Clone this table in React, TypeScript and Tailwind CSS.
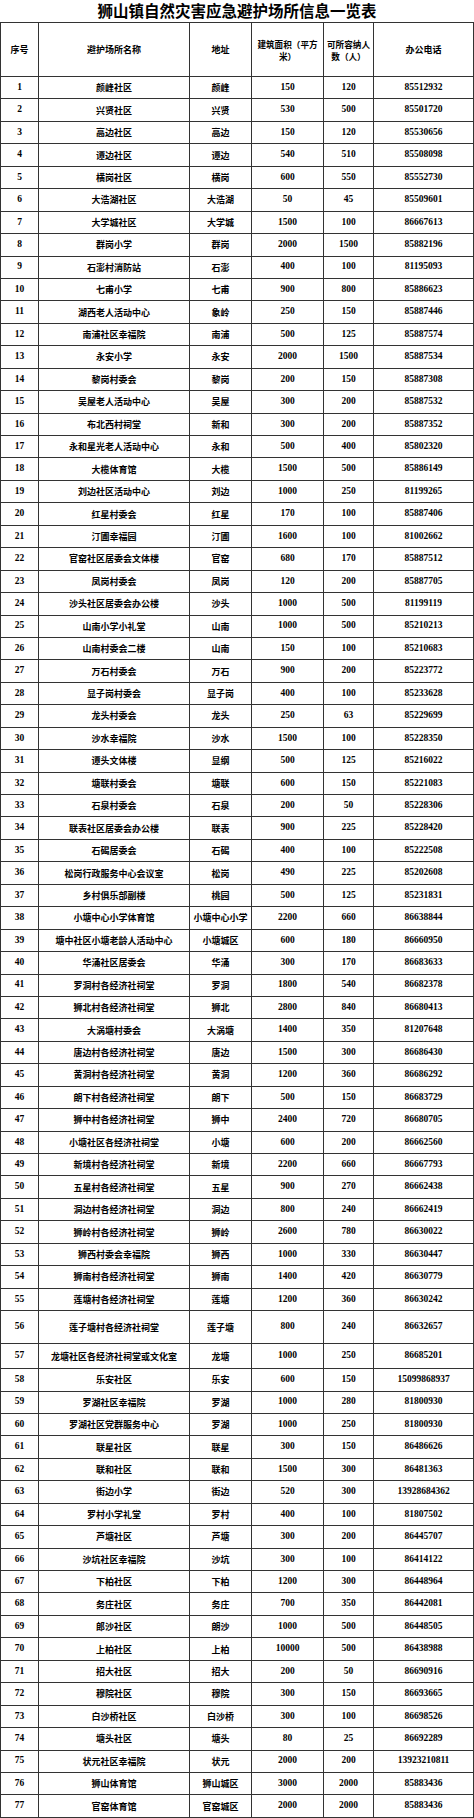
import React from "react";

type Row = [number, string, string, number, number, string];

const ROWS: Row[] = [
  [1, "颜峰社区", "颜峰", 150, 120, "85512932"],
  [2, "兴贤社区", "兴贤", 530, 500, "85501720"],
  [3, "高边社区", "高边", 150, 120, "85530656"],
  [4, "谭边社区", "谭边", 540, 510, "85508098"],
  [5, "横岗社区", "横岗", 600, 550, "85552730"],
  [6, "大浩湖社区", "大浩湖", 50, 45, "85509601"],
  [7, "大学城社区", "大学城", 1500, 100, "86667613"],
  [8, "群岗小学", "群岗", 2000, 1500, "85882196"],
  [9, "石澎村消防站", "石澎", 400, 100, "81195093"],
  [10, "七甫小学", "七甫", 900, 800, "85886623"],
  [11, "湖西老人活动中心", "象岭", 250, 150, "85887446"],
  [12, "南浦社区幸福院", "南浦", 500, 125, "85887574"],
  [13, "永安小学", "永安", 2000, 1500, "85887534"],
  [14, "黎岗村委会", "黎岗", 200, 150, "85887308"],
  [15, "吴屋老人活动中心", "吴屋", 300, 200, "85887532"],
  [16, "布北西村祠堂", "新和", 300, 200, "85887352"],
  [17, "永和星光老人活动中心", "永和", 500, 400, "85802320"],
  [18, "大榄体育馆", "大榄", 1500, 500, "85886149"],
  [19, "刘边社区活动中心", "刘边", 1000, 250, "81199265"],
  [20, "红星村委会", "红星", 170, 100, "85887406"],
  [21, "汀圃幸福园", "汀圃", 1600, 100, "81002662"],
  [22, "官窑社区居委会文体楼", "官窑", 680, 170, "85887512"],
  [23, "凤岗村委会", "凤岗", 120, 200, "85887705"],
  [24, "沙头社区居委会办公楼", "沙头", 1000, 500, "81199119"],
  [25, "山南小学小礼堂", "山南", 1000, 500, "85210213"],
  [26, "山南村委会二楼", "山南", 150, 100, "85210683"],
  [27, "万石村委会", "万石", 900, 200, "85223772"],
  [28, "显子岗村委会", "显子岗", 400, 100, "85233628"],
  [29, "龙头村委会", "龙头", 250, 63, "85229699"],
  [30, "沙水幸福院", "沙水", 1500, 100, "85228350"],
  [31, "谭头文体楼", "显纲", 500, 125, "85216022"],
  [32, "塘联村委会", "塘联", 600, 150, "85221083"],
  [33, "石泉村委会", "石泉", 200, 50, "85228306"],
  [34, "联表社区居委会办公楼", "联表", 900, 225, "85228420"],
  [35, "石碣居委会", "石碣", 400, 100, "85222508"],
  [36, "松岗行政服务中心会议室", "松岗", 490, 225, "85202608"],
  [37, "乡村俱乐部副楼", "桃园", 500, 125, "85231831"],
  [38, "小塘中心小学体育馆", "小塘中心小学", 2200, 660, "86638844"],
  [39, "塘中社区小塘老龄人活动中心", "小塘城区", 600, 180, "86660950"],
  [40, "华涌社区居委会", "华涌", 300, 170, "86683633"],
  [41, "罗洞村各经济社祠堂", "罗洞", 1800, 540, "86682378"],
  [42, "狮北村各经济社祠堂", "狮北", 2800, 840, "86680413"],
  [43, "大涡塘村委会", "大涡塘", 1400, 350, "81207648"],
  [44, "唐边村各经济社祠堂", "唐边", 1500, 300, "86686430"],
  [45, "黄洞村各经济社祠堂", "黄洞", 1200, 360, "86686292"],
  [46, "朗下村各经济社祠堂", "朗下", 500, 150, "86683729"],
  [47, "狮中村各经济社祠堂", "狮中", 2400, 720, "86680705"],
  [48, "小塘社区各经济社祠堂", "小塘", 600, 200, "86662560"],
  [49, "新境村各经济社祠堂", "新境", 2200, 660, "86667793"],
  [50, "五星村各经济社祠堂", "五星", 900, 270, "86662438"],
  [51, "洞边村各经济社祠堂", "洞边", 800, 240, "86662419"],
  [52, "狮岭村各经济社祠堂", "狮岭", 2600, 780, "86630022"],
  [53, "狮西村委会幸福院", "狮西", 1000, 330, "86630447"],
  [54, "狮南村各经济社祠堂", "狮南", 1400, 420, "86630779"],
  [55, "莲塘村各经济社祠堂", "莲塘", 1200, 360, "86630242"],
  [56, "莲子塘村各经济社祠堂", "莲子塘", 800, 240, "86632657"],
  [57, "龙塘社区各经济社祠堂或文化室", "龙塘", 1000, 250, "86685201"],
  [58, "乐安社区", "乐安", 600, 150, "15099868937"],
  [59, "罗湖社区幸福院", "罗湖", 1000, 280, "81800930"],
  [60, "罗湖社区党群服务中心", "罗湖", 1000, 250, "81800930"],
  [61, "联星社区", "联星", 300, 150, "86486626"],
  [62, "联和社区", "联和", 1500, 300, "86481363"],
  [63, "街边小学", "街边", 520, 300, "13928684362"],
  [64, "罗村小学礼堂", "罗村", 400, 100, "81807502"],
  [65, "芦塘社区", "芦塘", 300, 200, "86445707"],
  [66, "沙坑社区幸福院", "沙坑", 300, 100, "86414122"],
  [67, "下柏社区", "下柏", 1200, 300, "86448964"],
  [68, "务庄社区", "务庄", 700, 350, "86442081"],
  [69, "郎沙社区", "朗沙", 1000, 500, "86448505"],
  [70, "上柏社区", "上柏", 10000, 500, "86438988"],
  [71, "招大社区", "招大", 200, 50, "86690916"],
  [72, "穆院社区", "穆院", 300, 150, "86693665"],
  [73, "白沙桥社区", "白沙桥", 300, 100, "86698526"],
  [74, "塘头社区", "塘头", 80, 25, "86692289"],
  [75, "状元社区幸福院", "状元", 2000, 200, "13923210811"],
  [76, "狮山体育馆", "狮山城区", 3000, 2000, "85883436"],
  [77, "官窑体育馆", "官窑城区", 2000, 2000, "85883436"],
];

const cols = "grid grid-cols-[38px_151px_62px_72px_50px_100px]";
const cell = "flex items-center justify-center border-r border-b border-[#333] whitespace-nowrap overflow-hidden";
const cjkFont = "font-['Noto_Sans_CJK_SC','Noto_Sans_CJK_JP',sans-serif] font-bold";
const cjk = `${cjkFont} text-[9px] leading-none`;
const num = "font-['Liberation_Serif',serif] font-bold text-[9.5px] leading-none";

function rowHeight(n: number) {
  if (n === 56) return "h-[33px]";
  if (n === 57) return "h-[25px]";
  return "h-[22.44px]";
}

export default function App() {
  return (
    <div className="w-[474px] bg-white text-black">
      <h1 className="h-[22px] flex items-center justify-center font-['Noto_Sans_CJK_SC',sans-serif] font-bold text-[15.5px] leading-none">
        狮山镇自然灾害应急避护场所信息一览表
      </h1>

      <div className="w-[474px] border-l border-t border-[#333]">
        {/* 表头 */}
        <div className={`${cols} h-[54px]`}>
          <div className={`${cell} ${cjk}`}>序号</div>
          <div className={`${cell} ${cjk}`}>避护场所名称</div>
          <div className={`${cell} ${cjk}`}>地址</div>
          <div className={`${cell}`}>
            <p className={`${cjkFont} text-[8.6px] leading-[12px] text-center`}>
              建筑面积（平方
              <br />
              米）
            </p>
          </div>
          <div className={`${cell}`}>
            <p className={`${cjkFont} text-[8.6px] leading-[12px] text-center`}>
              可所容纳人
              <br />
              数（人）
            </p>
          </div>
          <div className={`${cell} ${cjk}`}>办公电话</div>
        </div>

        {ROWS.map(([no, name, addr, area, cap, tel]) => (
          <div key={no} className={`${cols} ${rowHeight(no)}`}>
            <div className={`${cell} ${num}`}>{no}</div>
            <div className={`${cell} ${cjk}`}>{name}</div>
            <div className={`${cell} ${cjk}`}>{addr}</div>
            <div className={`${cell} ${num}`}>{area}</div>
            <div className={`${cell} ${num}`}>{cap}</div>
            <div className={`${cell} ${num}`}>{tel}</div>
          </div>
        ))}
      </div>
    </div>
  );
}
